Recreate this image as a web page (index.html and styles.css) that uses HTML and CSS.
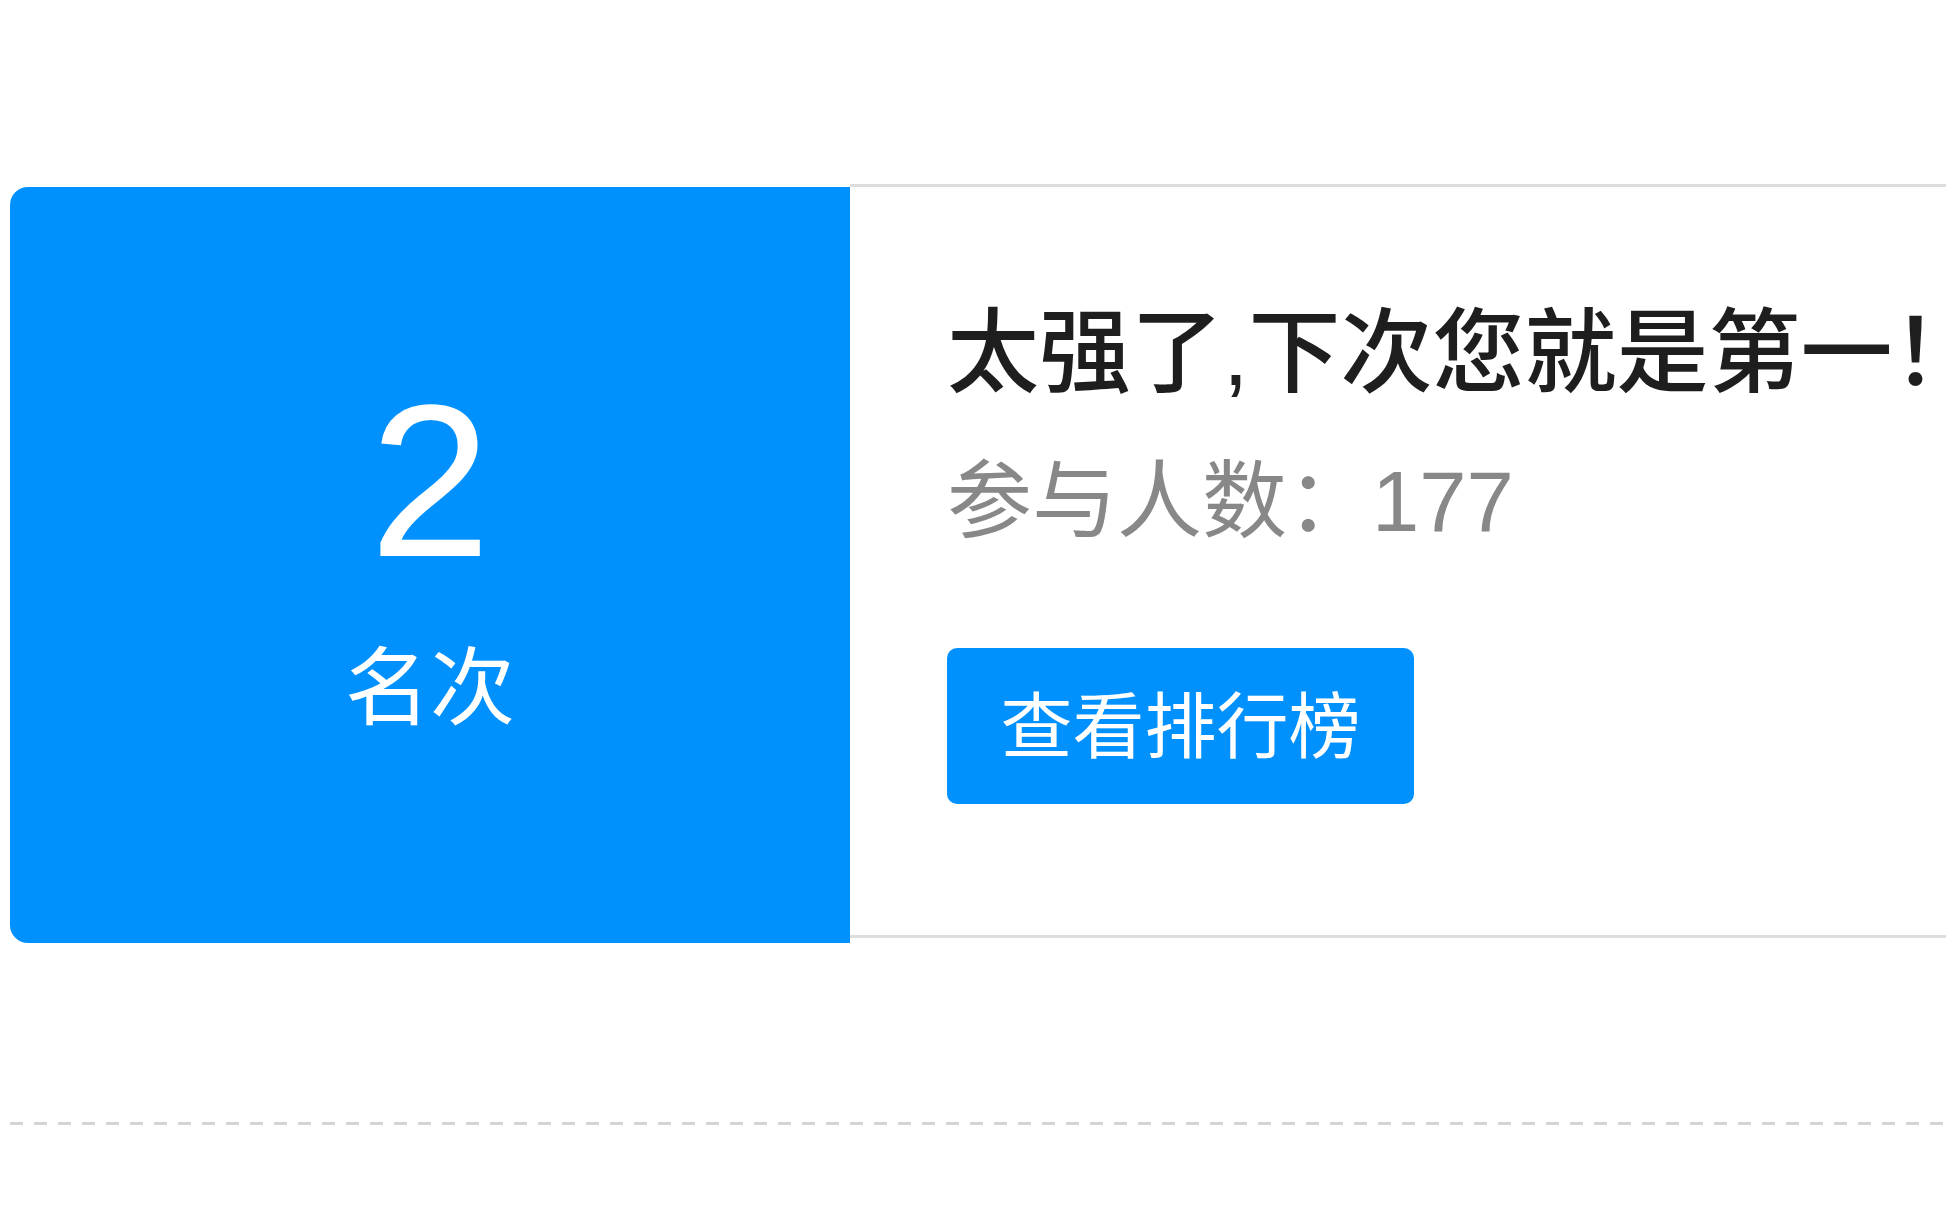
FILE: index.html
```html
<!DOCTYPE html>
<html lang="zh-CN">
<head>
  <meta charset="UTF-8">
  <meta name="viewport" content="width=device-width, initial-scale=1">
  <title>答题结果</title>
  <link rel="stylesheet" href="styles.css">
</head>
<body>

  <div class="page">
    <div class="result">
      <div class="rank-box">
        <div class="rank-num">2</div>
        <div class="rank-label">名次</div>
      </div>
      <div class="result-info">
        <div class="result-title">太强了,下次您就是第一！</div>
        <div class="result-count">参与人数：177</div>
        <button class="rank-btn">查看排行榜</button>
      </div>
    </div>

    <div class="divider"></div>
  </div>

</body>
</html>
```

FILE: styles.css
```css
body {
  font-family: 'Liberation Sans', 'Noto Sans CJK SC', sans-serif;
  background: #fff;
  margin: 0;
  padding: 0;
  overflow: hidden;
}

.page {
  padding: 184px 0 0 10px;
}

.result {
  display: flex;
  align-items: flex-start;
}

.rank-box {
  flex: 0 0 840px;
  height: 756px;
  margin-top: 3px;
  padding-bottom: 28px;
  box-sizing: border-box;
  background: #0091ff;
  border-radius: 18px 0 0 18px;
  color: #fff;
  display: flex;
  flex-direction: column;
  align-items: center;
  justify-content: center;
}

.rank-num {
  font-size: 218px;
  line-height: 1;
}

.rank-label {
  font-size: 85px;
  line-height: 1;
  margin-top: 56px;
}

.result-info {
  flex: 0 0 1400px;
  height: 754px;
  box-sizing: border-box;
  border-top: 3px solid #ddd;
  border-bottom: 3px solid #ddd;
  padding: 120px 0 0 97px;
}

.result-title {
  font-size: 92px;
  font-weight: 500;
  line-height: 1;
  color: #1e1e1e;
  white-space: nowrap;
}

.result-count {
  font-size: 85px;
  line-height: 1;
  color: #888;
  margin-top: 60px;
}

.rank-btn {
  margin-top: 104px;
  width: 467px;
  height: 156px;
  padding: 0 0 12px;
  background: #0091ff;
  color: #fff;
  border: none;
  border-radius: 10px;
  font-family: 'Noto Sans CJK SC', sans-serif;
  font-size: 72px;
  cursor: pointer;
}

.divider {
  margin-top: 179px;
  height: 3px;
  background: repeating-linear-gradient(to right, #d4d4d4 0 13px, transparent 13px 24px);
}
```
